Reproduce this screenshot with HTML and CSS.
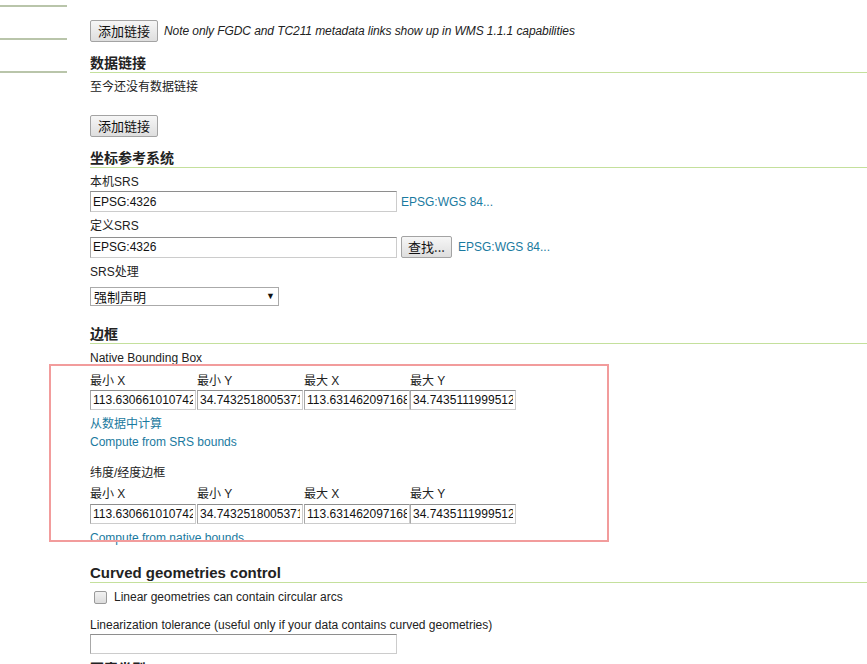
FILE: index.html
```html
<!DOCTYPE html>
<html lang="zh">
<head>
<meta charset="utf-8">
<title>Layer</title>
<link rel="stylesheet" href="styles.css">
</head>
<body>
<div class="page">
  <nav class="sidebar">
    <div class="nav-item first"></div>
    <div class="nav-item"></div>
    <div class="nav-item"></div>
  </nav>
  <main class="content">
    <div class="action-row">
      <button class="btn">添加链接</button>
      <span class="note">Note only FGDC and TC211 metadata links show up in WMS 1.1.1 capabilities</span>
    </div>

    <h3 class="section first-section">数据链接</h3>
    <p class="empty">至今还没有数据链接</p>
    <button class="btn btn-add">添加链接</button>

    <h3 class="section">坐标参考系统</h3>
    <label class="field-label">本机SRS</label>
    <div class="field-row first-row">
      <input class="text-input wide" type="text" value="EPSG:4326">
      <a class="link srs-link" href="#">EPSG:WGS 84...</a>
    </div>
    <label class="field-label">定义SRS</label>
    <div class="field-row second-row">
      <input class="text-input wide" type="text" value="EPSG:4326">
      <button class="btn btn-find">查找...</button>
      <a class="link find-link" href="#">EPSG:WGS 84...</a>
    </div>
    <label class="field-label">SRS处理</label>
    <div class="select-wrap">
      <select class="select">
        <option>强制声明</option>
      </select>
    </div>

    <h3 class="section bbox-section">边框</h3>
    <div class="field-label">Native Bounding Box</div>
    <div class="bbox">
      <span class="bbox-label">最小 X</span>
      <span class="bbox-label">最小 Y</span>
      <span class="bbox-label">最大 X</span>
      <span class="bbox-label">最大 Y</span>
      <input class="text-input bbox-input" type="text" value="113.630661010742">
      <input class="text-input bbox-input" type="text" value="34.7432518005371">
      <input class="text-input bbox-input" type="text" value="113.631462097168">
      <input class="text-input bbox-input" type="text" value="34.7435111999512">
    </div>
    <div class="links">
      <a class="link block-link" href="#">从数据中计算</a>
      <a class="link block-link" href="#">Compute from SRS bounds</a>
    </div>

    <div class="field-label latlon-label">纬度/经度边框</div>
    <div class="bbox bbox-second">
      <span class="bbox-label">最小 X</span>
      <span class="bbox-label">最小 Y</span>
      <span class="bbox-label">最大 X</span>
      <span class="bbox-label">最大 Y</span>
      <input class="text-input bbox-input" type="text" value="113.630661010742">
      <input class="text-input bbox-input" type="text" value="34.7432518005371">
      <input class="text-input bbox-input" type="text" value="113.631462097168">
      <input class="text-input bbox-input" type="text" value="34.7435111999512">
    </div>
    <div class="links">
      <a class="link block-link" href="#">Compute from native bounds</a>
    </div>

    <h3 class="section section-en">Curved geometries control</h3>
    <label class="check-row">
      <input class="checkbox" type="checkbox">
      <span>Linear geometries can contain circular arcs</span>
    </label>
    <label class="field-label tol-label">Linearization tolerance (useful only if your data contains curved geometries)</label>
    <input class="text-input wide tol-input" type="text" value="">

    <h3 class="section next-section">要素类型</h3>
  </main>
  <div class="highlight"></div>
</div>
</body>
</html>
```

FILE: styles.css
```css
* { box-sizing: border-box; }

html, body {
  margin: 0;
  padding: 0;
  background: #ffffff;
  overflow: hidden;
}

body {
  font-family: "Liberation Sans", "Noto Sans CJK SC", sans-serif;
  font-size: 12px;
  color: #222222;
}

.page {
  position: relative;
  display: flex;
  align-items: flex-start;
  width: 867px;
  height: 664px;
  overflow: hidden;
}

.sidebar {
  width: 67px;
  flex: none;
}

.nav-item {
  height: 33px;
  border-bottom: 2px solid #b9c5aa;
}

.nav-item.first {
  height: 7px;
}

.content {
  flex: 1;
  margin-left: 23px;
  padding-top: 20px;
}

.action-row {
  display: flex;
  align-items: center;
  height: 22px;
}

.btn {
  font-family: "Noto Sans CJK SC", "Liberation Sans", sans-serif;
  font-size: 13px;
  color: #111111;
  height: 22px;
  padding: 0 6px;
  line-height: 20px;
  border: 1px solid #a3a3a3;
  border-radius: 2px;
  background: linear-gradient(#f6f6f6, #dedede);
  margin: 0;
}

.action-row .btn {
  width: 68px;
}

.note {
  font-style: italic;
  margin-left: 6px;
  color: #222222;
  letter-spacing: -0.08px;
}

.section {
  margin: 12px 0 0;
  font-family: "Liberation Sans", "Noto Sans CJK SC", sans-serif;
  font-size: 14px;
  font-weight: bold;
  line-height: 18px;
  height: 19px;
  padding-bottom: 0;
  border-bottom: 1px solid #c4e09c;
  color: #222222;
  overflow: visible;
}

.empty {
  margin: 6px 0 0;
  line-height: 16px;
  height: 16px;
}

.btn-add {
  display: block;
  margin-top: 20px;
  width: 68px;
}

.field-label {
  display: block;
  margin-top: 6px;
  line-height: 16px;
  height: 16px;
}

.field-row {
  display: flex;
  align-items: center;
}

.first-row {
  margin-top: 1px;
  height: 21px;
}

.second-row {
  margin-top: 2px;
  height: 22px;
}

.text-input {
  font-family: "Liberation Sans", "Noto Sans CJK SC", sans-serif;
  font-size: 12px;
  color: #111111;
  height: 21px;
  padding: 0 2px;
  margin: 0;
  border: 1px solid #cccccc;
  border-top-color: #8e8e8e;
  border-left-color: #a8a8a8;
  background: #ffffff;
  outline: none;
}

.wide {
  width: 307px;
}

.link {
  color: #1a7aa0;
  text-decoration: none;
}

.srs-link {
  margin-left: 4px;
}

.btn-find {
  width: 51px;
  margin-left: 4px;
  padding: 0;
}

.find-link {
  margin-left: 6px;
}

.select-wrap {
  position: relative;
  width: 189px;
  margin-top: 7px;
}

.select {
  display: block;
  width: 189px;
  height: 19px;
  margin: 0;
  padding: 0 3px;
  font-family: "Noto Sans CJK SC", "Liberation Sans", sans-serif;
  font-size: 13px;
  line-height: 17px;
  color: #111111;
  border: 1px solid #aaaaaa;
  border-radius: 0;
  background: #ffffff;
  -webkit-appearance: none;
  appearance: none;
}

.select-wrap::after {
  content: "▼";
  position: absolute;
  right: 4px;
  top: 4px;
  font-size: 9px;
  line-height: 10px;
  color: #111111;
  pointer-events: none;
}

.bbox-section {
  margin-top: 19px;
}

.bbox {
  display: grid;
  grid-template-columns: 107px 107px 106px 107px;
  grid-template-rows: 16px 20px;
  width: 427px;
  margin-top: 7px;
  row-gap: 1px;
}

.bbox-second {
  margin-top: 5px;
  row-gap: 2px;
}

.bbox-label {
  line-height: 16px;
  height: 16px;
}

.bbox-input {
  width: 106px;
  height: 20px;
}

.links {
  margin-top: 5px;
}

.block-link {
  display: block;
  line-height: 18px;
  height: 18px;
  width: max-content;
}

.latlon-label {
  margin-top: 14px;
}

.section-en {
  margin-top: 16px;
  font-size: 15px;
  line-height: 19px;
  height: 20px;
  padding-bottom: 0;
}

.check-row {
  display: flex;
  align-items: center;
  margin-top: 6px;
  height: 16px;
  line-height: 16px;
}

.checkbox {
  -webkit-appearance: none;
  appearance: none;
  width: 13px;
  height: 13px;
  margin: 0 7px 0 4px;
  border: 1px solid #9a9a9a;
  border-radius: 2px;
  background: linear-gradient(#f2f2f2, #dcdcdc);
}

.tol-label {
  margin-top: 12px;
}

.tol-input {
  display: block;
  margin-top: 1px;
  height: 20px;
}

.next-section {
  margin-top: 6px;
  border-bottom: none;
}

.highlight {
  position: absolute;
  left: 49px;
  top: 364px;
  width: 560px;
  height: 178px;
  border: 2px solid #f29c9c;
  pointer-events: none;
}
```
